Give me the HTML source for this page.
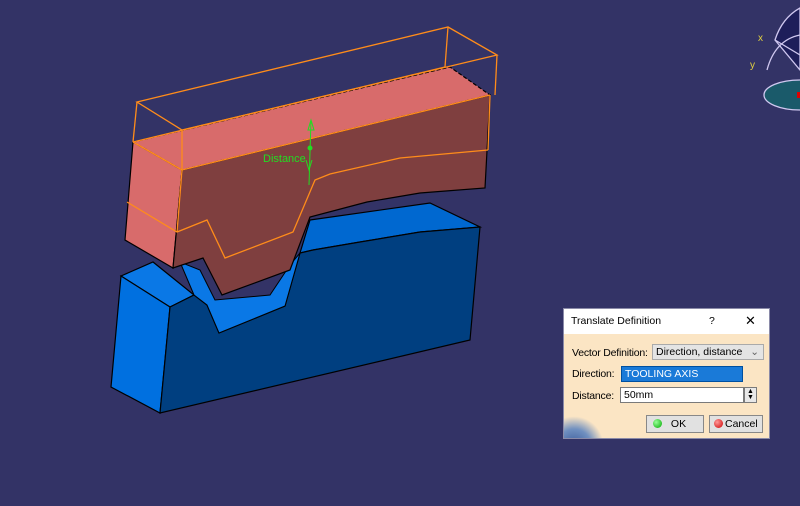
<!DOCTYPE html>
<html><head><style>
body{margin:0;width:800px;height:506px;background:#333366;overflow:hidden;position:relative;font-family:"Liberation Sans",sans-serif}
.dlg{position:absolute;left:563px;top:308px;width:207px;height:131px;background:#fbe5c4;border:1px solid #8a8aa8;box-sizing:border-box;font-size:10.5px;color:#000}
.tb{height:25px;background:#fff;position:relative}
.tb span{position:absolute;top:6px}
.row{position:absolute;left:8px;letter-spacing:-0.2px}
.box{position:absolute;border:1px solid #7a7a7a;background:#fff;height:16px;box-sizing:border-box;padding:1px 3px;font-size:10.5px;white-space:nowrap;overflow:hidden}
.btn{position:absolute;top:106px;height:18px;background:#e1e1e1;border:1px solid #888;box-sizing:border-box;font-size:10.5px;line-height:16px}
.dot{display:inline-block;width:9px;height:9px;border-radius:50%;vertical-align:-1px;margin-right:6px}
</style></head><body>
<svg width="800" height="506" style="position:absolute;left:0;top:0">
<polygon points="121,276 153,262 194,295 170,307" fill="#0a78e6" stroke="#000" stroke-width="1.2"/>
<polygon points="121,276 170,307 160,413 111,387" fill="#0070e0" stroke="#000" stroke-width="1.2"/>
<polygon points="310,220 430,203 480,227 420,232 360,242 313,250 300,253" fill="#0068d0" stroke="#000" stroke-width="1.2"/>
<polygon points="194,295 207,305 219,333 285,306 300,253 313,250 360,242 420,232 480,227 470,340 160,413 170,307" fill="#003f80" stroke="#000" stroke-width="1.2"/>
<polygon points="194,295 207,305 219,333 285,306 300,253 290,265 270,295 215,300 200,270 180,262" fill="#0a78e6" stroke="#000" stroke-width="1"/>
<polygon points="133,142 182,170 173,268 125,240" fill="#d86b6b" stroke="#000" stroke-width="1.2"/>
<polygon points="182,170 490,95 485,188 420,193 367,202 310,217 290,270 222,295 203,258 173,268" fill="#7f3f3f" stroke="#000" stroke-width="1.2"/>
<polygon points="133,142 450,67 490,95 182,170" fill="#d86b6b"/>
<polyline points="133,142 182,170 490,95 450,67 133,142" fill="none" stroke="#000" stroke-width="1.2" stroke-dasharray="4,2"/>
<g fill="none" stroke="#ff8c1a" stroke-width="1.3">
<polygon points="137,102 448,27 497,55 182,130"/>
<line x1="137" y1="102" x2="133" y2="142"/><line x1="448" y1="27" x2="445" y2="67"/>
<line x1="497" y1="55" x2="495" y2="95"/><line x1="182" y1="130" x2="182" y2="170"/>
<line x1="133" y1="142" x2="182" y2="170"/><line x1="182" y1="170" x2="490" y2="95"/><line x1="133" y1="142" x2="445" y2="67"/>
<line x1="182" y1="170" x2="177" y2="232"/><line x1="490" y1="95" x2="488" y2="150"/>
<polyline points="127,202 177,232 207,220 225,258 293,232 315,180 330,174 400,158 488,150"/>
</g>
<g stroke="#22dd22" fill="none" stroke-width="1">
<line x1="311" y1="120" x2="309" y2="185"/><path d="M308,130 L311,120 L314,130 Z M306,160 L309,170 L312,160"/>
<circle cx="310" cy="148" r="2" fill="#22dd22"/>
</g>
<text x="263" y="162" fill="#22dd22" font-size="11" font-family="Liberation Sans">Distance</text>
<path d="M775,40 Q782,18 800,8 L800,70 Z" fill="#1e1e5a" stroke="#d0c8f0" stroke-width="1.3"/>
<path d="M767,70 Q775,40 800,35" fill="none" stroke="#d0c8f0" stroke-width="1.3"/>
<line x1="775" y1="40" x2="800" y2="55" stroke="#d0c8f0" stroke-width="1.3"/>
<ellipse cx="800" cy="95" rx="36" ry="15" fill="#1a5a6a" stroke="#d0c8f0" stroke-width="1.3"/>
<rect x="797" y="92" width="3" height="6" fill="#d00"/>
<text x="758" y="41" fill="#e0d040" font-size="10">x</text>
<text x="750" y="68" fill="#e0d040" font-size="10">y</text>
</svg>
<div class="dlg">
<div class="tb"><span style="left:7px">Translate Definition</span><span style="left:145px">?</span><span style="left:181px;font-size:13px;top:4px">✕</span></div>
<div style="position:absolute;left:0;bottom:0;width:40px;height:22px;background:radial-gradient(ellipse at 10px 30px,#3a5a9a 0,#7090c0 40%,transparent 70%)"></div>
<div class="row" style="top:38px">Vector Definition:</div>
<div class="box" style="left:88px;top:35px;width:112px;background:#e4e4e4;border-color:#aaa">Direction, distance<span style="position:absolute;right:4px;color:#666">⌄</span></div>
<div class="row" style="top:59px">Direction:</div>
<div class="box" style="left:57px;top:57px;width:122px;background:#1a7ad8;color:#fff;border-color:#0050a0">TOOLING AXIS</div>
<div class="row" style="top:81px">Distance:</div>
<div class="box" style="left:56px;top:78px;width:124px">50mm</div>
<div class="box" style="left:180px;top:78px;width:13px;background:#e8e8e8;font-size:7px;line-height:6px;padding:1px 2px">▲<br>▼</div>
<div class="btn" style="left:82px;width:58px;padding-left:6px"><span class="dot" style="background:radial-gradient(circle at 35% 35%,#9f9,#0a0)"></span>&nbsp;OK</div>
<div class="btn" style="left:145px;width:54px;padding-left:4px"><span class="dot" style="background:radial-gradient(circle at 35% 35%,#f99,#c00);margin-right:2px"></span>Cancel</div>
</div>
</body></html>
